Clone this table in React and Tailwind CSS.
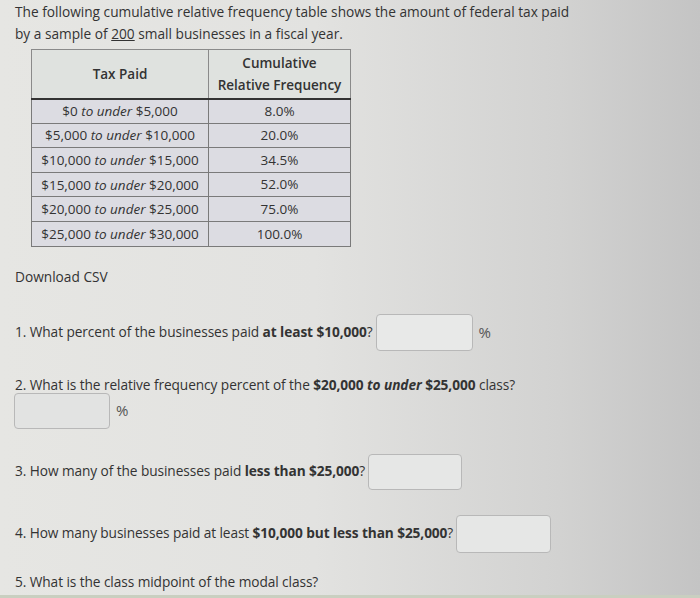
export default function App() {
  const rows = [
    ["$0 to under $5,000", "8.0%"],
    ["$5,000 to under $10,000", "20.0%"],
    ["$10,000 to under $15,000", "34.5%"],
    ["$15,000 to under $20,000", "52.0%"],
    ["$20,000 to under $25,000", "75.0%"],
    ["$25,000 to under $30,000", "100.0%"],
  ];
  return (
    <div className="w-[700px] h-[598px] overflow-hidden bg-[linear-gradient(90deg,#e6e6e3_0%,#e2e2e0_45%,#d2d2d1_80%,#c4c4c4_100%)] text-[#333] font-['Open_Sans',sans-serif] text-[13.7px] relative">
      <div className="pl-[15px] pt-[1px] leading-[22px]">
        <p>The following cumulative relative frequency table shows the amount of federal tax paid</p>
        <p>by a sample of <span className="underline">200</span> small businesses in a fiscal year.</p>
      </div>
      <table className="ml-[31px] mt-[4px] border-collapse w-[320px] text-[13.5px]">
        <thead>
          <tr className="bg-[#dfe2df] border-b-2 border-[#333]">
            <th className="border border-[#8a8a8a] w-[177px] h-[49px] font-semibold">Tax Paid</th>
            <th className="border border-[#8a8a8a] font-semibold leading-[22px]">Cumulative<br />Relative Frequency</th>
          </tr>
        </thead>
        <tbody>
          {rows.map(([a, b]) => (
            <tr key={a} className="bg-[#dcdce2] h-[24.6px]">
              <td className="border border-[#7a7a7a] text-center leading-[20px]">
                {a.split(" to under ").map((p, i) => (i === 0 ? <span key={i}>{p} <i>to under</i> </span> : <span key={i}>{p}</span>))}
              </td>
              <td className="border border-[#7a7a7a] text-center">{b}</td>
            </tr>
          ))}
        </tbody>
      </table>
      <div className="pl-[15px] mt-[20px]">Download CSV</div>
      <div className="pl-[15px] mt-[27px] flex items-center tracking-[-0.08px]">
        <span>1. What percent of the businesses paid <b>at least $10,000</b>?</span>
        <span className="ml-[3px] w-[97px] h-[37px] rounded-[4px] border border-[#b8b8b8] bg-[#e8e9e8]"></span>
        <span className="ml-[6px] text-[15px] text-[#555]">%</span>
      </div>
      <div className="pl-[15px] mt-[24px] tracking-[-0.08px]">2. What is the relative frequency percent of the <b>$20,000 <i>to under</i> $25,000</b> class?</div>
      <div className="pl-[14px] -mt-[3px] flex items-center">
        <span className="w-[96px] h-[36px] rounded-[4px] border border-[#b8b8b8] bg-[#e2e3e2]"></span>
        <span className="ml-[6px] text-[15px] text-[#555]">%</span>
      </div>
      <div className="pl-[15px] mt-[25px] flex items-center tracking-[-0.08px]">
        <span>3. How many of the businesses paid <b>less than $25,000</b>?</span>
        <span className="ml-[3px] w-[94px] h-[36px] rounded-[4px] border border-[#b8b8b8] bg-[#e6e7e6]"></span>
      </div>
      <div className="pl-[15px] mt-[25px] flex items-center tracking-[-0.1px]">
        <span>4. How many businesses paid at least <b>$10,000 but less than $25,000</b>?</span>
        <span className="ml-[3px] w-[95px] h-[38px] rounded-[4px] border border-[#b8b8b8] bg-[#e6e7e6]"></span>
      </div>
      <div className="pl-[15px] mt-[19px] tracking-[-0.08px]">5. What is the class midpoint of the modal class?</div>
      <div className="absolute left-0 bottom-0 w-full h-[3px] bg-[#c9cfc0]"></div>
    </div>
  );
}
